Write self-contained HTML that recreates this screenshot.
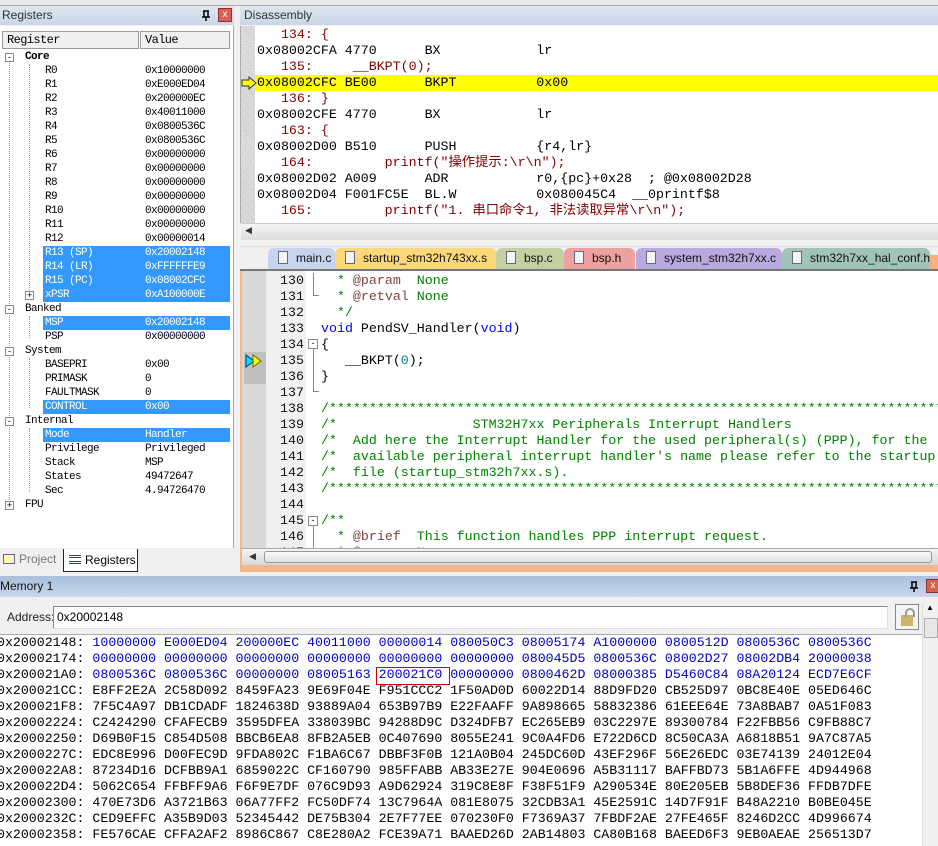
<!DOCTYPE html>
<html><head><meta charset="utf-8"><style>
*{margin:0;padding:0;box-sizing:border-box}
body{width:938px;height:846px;overflow:hidden;background:#f0f0f0;position:relative;font-family:"Liberation Sans",sans-serif}
.a{position:absolute}
pre{font-family:"Liberation Mono","Noto Sans CJK SC",monospace;margin:0}
.title{background:linear-gradient(#dfe6f0,#c9d6e8);font-size:12px;color:#333;padding-left:2px;line-height:18px}
.reg{font-family:"Liberation Mono",monospace;font-size:11px;letter-spacing:-0.6px;line-height:14px;color:#000}
.row{position:absolute;left:0;height:14px;width:230px;white-space:nowrap}
.sel{background:#3399ff;color:#fff}
.dis{font-size:13.3px;line-height:16px;color:#000}
.src{color:#800000}
.cm{color:#008000}
.kw{color:#0000ff}
.at{color:#804040}
.nm{color:#008080}
.mem{font-size:13.25px;line-height:16px;color:#000}
.b{color:#0000c0}
.tab{position:absolute;top:248px;height:21px;font-size:12px;line-height:21px;color:#111;border-radius:6px 6px 0 0;white-space:nowrap;overflow:hidden}
.ic{display:inline-block;width:10px;height:13px;border:1px solid #667;background:#f4f4f4;vertical-align:-2px;margin:0 8px 0 10px}
</style></head><body>
<div class="a" style="left:0;top:0;width:938px;height:6px;background:#e8e8e8;border-bottom:1px solid #aaa"></div>

<div class="a title" style="left:0;top:6px;width:234px;height:19px">Registers
<svg class="a" style="left:201px;top:4px" width="10" height="11"><path d="M2 1h6M3 1v6M7 1v6M1 7h8M5 7v4" stroke="#000" stroke-width="1.5" fill="none"/></svg>
<span class="a" style="left:218px;top:2px;width:14px;height:14px;background:#d9614f;border:1px solid #833;color:#fff;font-size:10px;line-height:12px;text-align:center">x</span></div>
<div class="a" style="left:0;top:26px;width:234px;height:522px;background:#fff;border-right:1px solid #aaa"></div>
<div class="a reg" style="left:2px;top:31px;width:137px;height:18px;background:#f0f0f0;border:1px solid #999;line-height:16px;padding-left:4px;font-size:12px">Register</div>
<div class="a reg" style="left:140px;top:31px;width:90px;height:18px;background:#f0f0f0;border:1px solid #999;line-height:16px;padding-left:4px;font-size:12px">Value</div>
<div class="a" style="left:9px;top:57px;height:447px;border-left:1px dotted #999"></div>
<div class="a" style="left:29px;top:64px;height:232px;border-left:1px dotted #999"></div>
<div class="a" style="left:29px;top:316px;height:22px;border-left:1px dotted #999"></div>
<div class="a" style="left:29px;top:358px;height:50px;border-left:1px dotted #999"></div>
<div class="a" style="left:29px;top:428px;height:64px;border-left:1px dotted #999"></div>
<div class="a reg" style="left:0;top:50px;width:232px;height:470px">
<div class="row" style="top:0"><b style="position:absolute;left:25px">Core</b></div>
<div class="row" style="top:14px"><span class="a" style="left:45px">R0</span><span class="a" style="left:145px">0x10000000</span></div>
<div class="row" style="top:28px"><span class="a" style="left:45px">R1</span><span class="a" style="left:145px">0xE000ED04</span></div>
<div class="row" style="top:42px"><span class="a" style="left:45px">R2</span><span class="a" style="left:145px">0x200000EC</span></div>
<div class="row" style="top:56px"><span class="a" style="left:45px">R3</span><span class="a" style="left:145px">0x40011000</span></div>
<div class="row" style="top:70px"><span class="a" style="left:45px">R4</span><span class="a" style="left:145px">0x0800536C</span></div>
<div class="row" style="top:84px"><span class="a" style="left:45px">R5</span><span class="a" style="left:145px">0x0800536C</span></div>
<div class="row" style="top:98px"><span class="a" style="left:45px">R6</span><span class="a" style="left:145px">0x00000000</span></div>
<div class="row" style="top:112px"><span class="a" style="left:45px">R7</span><span class="a" style="left:145px">0x00000000</span></div>
<div class="row" style="top:126px"><span class="a" style="left:45px">R8</span><span class="a" style="left:145px">0x00000000</span></div>
<div class="row" style="top:140px"><span class="a" style="left:45px">R9</span><span class="a" style="left:145px">0x00000000</span></div>
<div class="row" style="top:154px"><span class="a" style="left:45px">R10</span><span class="a" style="left:145px">0x00000000</span></div>
<div class="row" style="top:168px"><span class="a" style="left:45px">R11</span><span class="a" style="left:145px">0x00000000</span></div>
<div class="row" style="top:182px"><span class="a" style="left:45px">R12</span><span class="a" style="left:145px">0x00000014</span></div>
<div class="row sel" style="top:196px;left:43px;width:187px"><span class="a" style="left:2px">R13 (SP)</span><span class="a" style="left:102px">0x20002148</span></div>
<div class="row sel" style="top:210px;left:43px;width:187px"><span class="a" style="left:2px">R14 (LR)</span><span class="a" style="left:102px">0xFFFFFFE9</span></div>
<div class="row sel" style="top:224px;left:43px;width:187px"><span class="a" style="left:2px">R15 (PC)</span><span class="a" style="left:102px">0x08002CFC</span></div>
<div class="row sel" style="top:238px;left:43px;width:187px"><span class="a" style="left:2px">xPSR</span><span class="a" style="left:102px">0xA100000E</span></div>
<div class="row" style="top:252px"><span class="a" style="left:25px">Banked</span></div>
<div class="row sel" style="top:266px;left:43px;width:187px"><span class="a" style="left:2px">MSP</span><span class="a" style="left:102px">0x20002148</span></div>
<div class="row" style="top:280px"><span class="a" style="left:45px">PSP</span><span class="a" style="left:145px">0x00000000</span></div>
<div class="row" style="top:294px"><span class="a" style="left:25px">System</span></div>
<div class="row" style="top:308px"><span class="a" style="left:45px">BASEPRI</span><span class="a" style="left:145px">0x00</span></div>
<div class="row" style="top:322px"><span class="a" style="left:45px">PRIMASK</span><span class="a" style="left:145px">0</span></div>
<div class="row" style="top:336px"><span class="a" style="left:45px">FAULTMASK</span><span class="a" style="left:145px">0</span></div>
<div class="row sel" style="top:350px;left:43px;width:187px"><span class="a" style="left:2px">CONTROL</span><span class="a" style="left:102px">0x00</span></div>
<div class="row" style="top:364px"><span class="a" style="left:25px">Internal</span></div>
<div class="row sel" style="top:378px;left:43px;width:187px"><span class="a" style="left:2px">Mode</span><span class="a" style="left:102px">Handler</span></div>
<div class="row" style="top:392px"><span class="a" style="left:45px">Privilege</span><span class="a" style="left:145px">Privileged</span></div>
<div class="row" style="top:406px"><span class="a" style="left:45px">Stack</span><span class="a" style="left:145px">MSP</span></div>
<div class="row" style="top:420px"><span class="a" style="left:45px">States</span><span class="a" style="left:145px">49472647</span></div>
<div class="row" style="top:434px"><span class="a" style="left:45px">Sec</span><span class="a" style="left:145px">4.94726470</span></div>
<div class="row" style="top:448px"><span class="a" style="left:25px">FPU</span></div>
</div>
<div class="a" style="left:5px;top:53px;width:9px;height:9px;border:1px solid #888;background:#fff;font-size:9px;line-height:7px;text-align:center">-</div>
<div class="a" style="left:5px;top:305px;width:9px;height:9px;border:1px solid #888;background:#fff;font-size:9px;line-height:7px;text-align:center">-</div>
<div class="a" style="left:5px;top:347px;width:9px;height:9px;border:1px solid #888;background:#fff;font-size:9px;line-height:7px;text-align:center">-</div>
<div class="a" style="left:5px;top:417px;width:9px;height:9px;border:1px solid #888;background:#fff;font-size:9px;line-height:7px;text-align:center">-</div>
<div class="a" style="left:5px;top:501px;width:9px;height:9px;border:1px solid #888;background:#fff;font-size:9px;line-height:7px;text-align:center">+</div>
<div class="a" style="left:25px;top:291px;width:9px;height:9px;border:1px solid #888;background:#fff;font-size:9px;line-height:7px;text-align:center">+</div>
<div class="a" style="left:0;top:548px;width:236px;height:25px;background:#f0f0f0"></div>
<div class="a" style="left:3px;top:552px;font-size:12px;color:#777"><span style="display:inline-block;width:12px;height:10px;border:1px solid #668;background:#fff8c0;margin-right:4px;vertical-align:-1px"></span>Project</div>
<div class="a" style="left:63px;top:549px;width:75px;height:23px;background:#fff;border:1px solid #222;border-top:none;font-size:12px;line-height:22px;padding-left:5px"><span style="display:inline-block;width:12px;height:9px;border-top:3px double #345;border-bottom:3px double #345;margin-right:4px;vertical-align:0"></span>Registers</div>

<div class="a title" style="left:240px;top:6px;width:698px;height:19px;padding-left:4px">Disassembly</div>
<div class="a" style="left:240px;top:26px;width:698px;height:197px;background:#fff;border-left:1px solid #aaa"></div>
<div class="a" style="left:241px;top:26px;width:14px;height:197px;background:repeating-linear-gradient(45deg,#c8c8c8 0 1px,#e8e8e8 1px 2px)"></div>
<div class="a" style="left:255px;top:75px;width:683px;height:16px;background:#ffff00"></div>
<svg class="a" style="left:241px;top:76px" width="16" height="14"><path d="M1 4h7V1l7 6-7 6v-3H1z" fill="#ffff00" stroke="#333" stroke-width="1"/></svg>
<pre class="a dis" style="left:257px;top:27px"><span class="src">   134: {</span>
0x08002CFA 4770      BX            lr
<span class="src">   135:     __BKPT(0);</span>
0x08002CFC BE00      BKPT          0x00
<span class="src">   136: }</span>
0x08002CFE 4770      BX            lr
<span class="src">   163: {</span>
0x08002D00 B510      PUSH          {r4,lr}
<span class="src">   164:         printf("操作提示:\r\n");</span>
0x08002D02 A009      ADR           r0,{pc}+0x28  ; @0x08002D28
0x08002D04 F001FC5E  BL.W          0x080045C4  __0printf$8
<span class="src">   165:         printf("1. 串口命令1, 非法读取异常\r\n");</span></pre>
<div class="a" style="left:241px;top:223px;width:697px;height:17px;background:linear-gradient(#f4f4f4,#dcdcdc);border-top:1px solid #ccc"><span class="a" style="left:4px;top:1px;font-size:9px;color:#333">◀</span></div>
<div class="a" style="left:236px;top:240px;width:702px;height:6px;background:#f0f0f0"></div>

<div class="a" style="left:240px;top:246px;width:698px;height:24px;background:#f0f0f0;border-top:1px solid #dde"></div>
<div class="tab" style="left:268px;width:67px;background:#c6d4ee"><span class="ic"></span>main.c</div>
<div class="tab" style="left:335px;width:161px;background:#fbd97a"><span class="ic"></span>startup_stm32h743xx.s</div>
<div class="tab" style="left:496px;width:68px;background:#c4cfa2"><span class="ic"></span>bsp.c</div>
<div class="tab" style="left:564px;width:71px;background:#eda1a1"><span class="ic"></span>bsp.h</div>
<div class="tab" style="left:636px;width:146px;background:#baa9df"><span class="ic"></span>system_stm32h7xx.c</div>
<div class="tab" style="left:782px;width:148px;background:#a0c5b8"><span class="ic"></span>stm32h7xx_hal_conf.h</div>
<div class="a" style="left:930px;top:255px;width:8px;height:14px;background:#f8b080"></div>
<div class="a" style="left:240px;top:269px;width:698px;height:2px;background:#777"></div>

<div class="a" style="left:240px;top:271px;width:698px;height:301px;background:#f6b68a"></div>
<div class="a" style="left:242px;top:271px;width:696px;height:277px;background:#fff"></div>
<div class="a" style="left:242px;top:271px;width:24px;height:277px;background:#d8d8d8"></div>
<div class="a" style="left:266px;top:271px;width:40px;height:277px;background:#f0f0f0"></div>
<div class="a" style="left:244px;top:352px;width:22px;height:32px;background:#c0c0c0"></div>
<svg class="a" style="left:245px;top:354px" width="20" height="14"><path d="M1 1l8 6-8 6z" fill="#00e0ff" stroke="#036" stroke-width="1"/><path d="M8 1l8 6-8 6z" fill="#ffff00" stroke="#660" stroke-width="1"/></svg>
<pre class="a dis" style="left:266px;top:273px;color:#111;text-align:right;width:38px">130
131
132
133
134
135
136
137
138
139
140
141
142
143
144
145
146
147</pre>
<div class="a" style="left:313px;top:273px;width:1px;height:22px;border-left:1px solid #888"></div>
<div class="a" style="left:313px;top:295px;width:6px;height:1px;background:#888"></div>
<div class="a" style="left:308px;top:339px;width:10px;height:10px;border:1px solid #888;background:#fff;font-size:9px;line-height:7px;text-align:center">-</div>
<div class="a" style="left:313px;top:349px;width:1px;height:42px;border-left:1px solid #888"></div>
<div class="a" style="left:313px;top:391px;width:6px;height:1px;background:#888"></div>
<div class="a" style="left:308px;top:516px;width:10px;height:10px;border:1px solid #888;background:#fff;font-size:9px;line-height:7px;text-align:center">-</div>
<div class="a" style="left:313px;top:526px;width:1px;height:22px;border-left:1px solid #888"></div>
<div class="a" style="left:242px;top:271px;width:696px;height:277px;overflow:hidden">
<pre class="a dis" style="left:79px;top:2px"><span class="cm">  * <span class="at">@param</span>  None</span>
<span class="cm">  * <span class="at">@retval</span> None</span>
<span class="cm">  */</span>
<span class="kw">void</span> PendSV_Handler(<span class="kw">void</span>)
{
   __BKPT(<span class="nm">0</span>);
}

<span class="cm">/******************************************************************************/</span>
<span class="cm">/*                 STM32H7xx Peripherals Interrupt Handlers                   */</span>
<span class="cm">/*  Add here the Interrupt Handler for the used peripheral(s) (PPP), for the  */</span>
<span class="cm">/*  available peripheral interrupt handler's name please refer to the startup */</span>
<span class="cm">/*  file (startup_stm32h7xx.s).                                               */</span>
<span class="cm">/******************************************************************************/</span>

<span class="cm">/**</span>
<span class="cm">  * <span class="at">@brief</span>  This function handles PPP interrupt request.</span>
<span class="cm">  * <span class="at">@param</span>  None</span></pre></div>
<div class="a" style="left:242px;top:548px;width:696px;height:17px;background:linear-gradient(#f4f4f4,#d8d8d8);border-top:1px solid #aaa"><span class="a" style="left:7px;top:2px;font-size:9px;color:#333">◀</span><span class="a" style="left:22px;top:2px;width:668px;height:12px;border:1px solid #999;border-radius:3px;background:linear-gradient(#fafafa,#e0e0e0)"></span></div>

<div class="a" style="left:0;top:576px;width:938px;height:21px;background:linear-gradient(#a9bfdc,#c8d7ea);font-size:12px;line-height:21px;color:#111">Memory 1
<svg class="a" style="left:909px;top:5px" width="10" height="11"><path d="M2 1h6M3 1v6M7 1v6M1 7h8M5 7v4" stroke="#000" stroke-width="1.5" fill="none"/></svg>
<span class="a" style="left:926px;top:3px;width:14px;height:14px;background:#d9614f;border:1px solid #833;color:#fff;font-size:10px;line-height:12px;text-align:center">x</span></div>
<div class="a" style="left:7px;top:610px;font-size:12px;color:#222">Address:</div>
<div class="a" style="left:53px;top:606px;width:835px;height:23px;background:#fff;border:1px solid #888;border-right-color:#ddd;border-bottom-color:#ddd;font-size:12px;line-height:20px;padding-left:3px">0x20002148</div>
<div class="a" style="left:895px;top:604px;width:24px;height:26px;border:1px solid #888;background:#f4f4f4"><div class="a" style="left:5px;top:10px;width:12px;height:11px;background:#c9b56a"></div><div class="a" style="left:9px;top:3px;width:10px;height:9px;border:2px solid #999;border-bottom:none;border-radius:5px 5px 0 0"></div></div>
<div class="a" style="left:0;top:634px;width:922px;height:212px;background:#fff;border-top:1px solid #aaa"></div>
<div class="a" style="left:922px;top:604px;width:16px;height:242px;background:#f0f0f0;border-left:1px solid #ddd"><span class="a" style="left:3px;top:-1px;font-size:8px">▲</span><span class="a" style="left:1px;top:14px;width:14px;height:20px;border:1px solid #aaa;background:#e8e8e8"></span></div>
<div class="a" style="left:376px;top:667px;width:74px;height:18px;border:1px solid #d00000"></div>
<pre class="a mem" style="left:-3px;top:635px">0x20002148: <span class="b">10000000 E000ED04 200000EC 40011000 00000014 080050C3 08005174 A1000000 0800512D 0800536C 0800536C</span>
0x20002174: <span class="b">00000000 00000000 00000000 00000000 00000000 00000000 080045D5 0800536C 08002D27 08002DB4 20000038</span>
0x200021A0: <span class="b">0800536C 0800536C 00000000 08005163 200021C0 00000000 0800462D 08000385 D5460C84 08A20124 ECD7E6CF</span>
0x200021CC: E8FF2E2A 2C58D092 8459FA23 9E69F04E F951CCC2 1F50AD0D 60022D14 88D9FD20 CB525D97 0BC8E40E 05ED646C
0x200021F8: 7F5C4A97 DB1CDADF 1824638D 93889A04 653B97B9 E22FAAFF 9A898665 58832386 61EEE64E 73A8BAB7 0A51F083
0x20002224: C2424290 CFAFECB9 3595DFEA 338039BC 94288D9C D324DFB7 EC265EB9 03C2297E 89300784 F22FBB56 C9FB88C7
0x20002250: D69B0F15 C854D508 BBCB6EA8 8FB2A5EB 0C407690 8055E241 9C0A4FD6 E722D6CD 8C50CA3A A6818B51 9A7C87A5
0x2000227C: EDC8E996 D00FEC9D 9FDA802C F1BA6C67 DBBF3F0B 121A0B04 245DC60D 43EF296F 56E26EDC 03E74139 24012E04
0x200022A8: 87234D16 DCFBB9A1 6859022C CF160790 985FFABB AB33E27E 904E0696 A5B31117 BAFFBD73 5B1A6FFE 4D944968
0x200022D4: 5062C654 FFBFF9A6 F6F9E7DF 076C9D93 A9D62924 319C8E8F F38F51F9 A290534E 80E205EB 5B8DEF36 FFDB7DFE
0x20002300: 470E73D6 A3721B63 06A77FF2 FC50DF74 13C7964A 081E8075 32CDB3A1 45E2591C 14D7F91F B48A2210 B0BE045E
0x2000232C: CED9EFFC A35B9D03 52345442 DE75B304 2E7F77EE 070230F0 F7369A37 7FBDF2AE 27FE465F 8246D2CC 4D996674
0x20002358: FE576CAE CFFA2AF2 8986C867 C8E280A2 FCE39A71 BAAED26D 2AB14803 CA80B168 BAEED6F3 9EB0AEAE 256513D7</pre>
</body></html>
